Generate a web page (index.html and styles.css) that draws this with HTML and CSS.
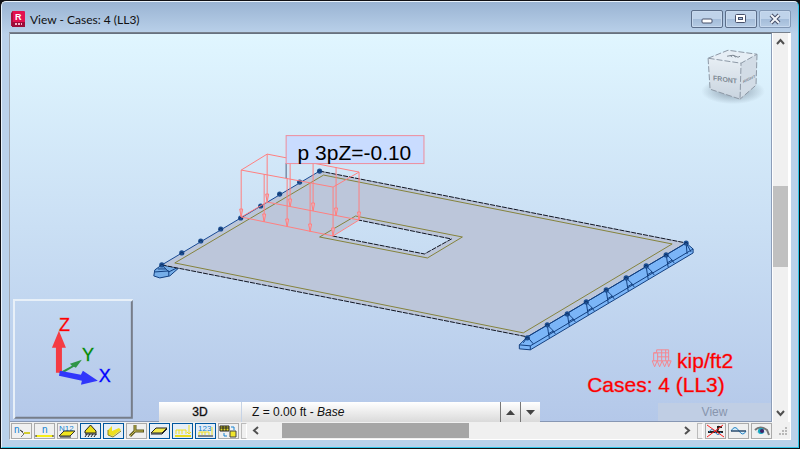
FILE: index.html
```html
<!DOCTYPE html>
<html lang="en">
<head>
<meta charset="utf-8">
<title>View - Cases: 4 (LL3)</title>
<link rel="stylesheet" href="styles.css">
</head>
<body>
<div class="window">
  <header class="titlebar">
    <svg class="app-icon" width="15" height="17" viewBox="0 0 15 17" aria-hidden="true">
      <rect x="1" y="0" width="13" height="16" rx="1" fill="#e3104f"/>
      <path d="M0 2l2-2v15H0z" fill="#a8123f"/>
      <path d="M1 11h13v5H1z" fill="#9c0b38"/>
      <text class="icon-letter" x="4" y="9">R</text>
      <path d="M4 13h7" stroke="#f3b3c6" stroke-width="2" stroke-dasharray="2 1"/>
    </svg>
    <h1 class="title">View - Cases: 4 (LL3)</h1>
    <div class="window-buttons">
      <button class="window-button" aria-label="Minimize"><svg width="14" height="12" viewBox="0 0 14 12"><rect x="2" y="6" width="10" height="4" rx="1" fill="#fff" stroke="#47506a"/></svg></button>
      <button class="window-button" aria-label="Maximize"><svg width="14" height="12" viewBox="0 0 14 12"><rect x="1.500" y="1.500" width="10" height="8" rx="1" fill="#fff" stroke="#47506a"/><rect x="4.500" y="4.500" width="4" height="2" fill="#a9c1df" stroke="#47506a"/></svg></button>
      <button class="window-button close" aria-label="Close"><svg width="14" height="12" viewBox="0 0 14 12"><path d="M3 2l8 8M11 2l-8 8" stroke="#47506a" stroke-width="4"/><path d="M3 2l8 8M11 2l-8 8" stroke="#f2f5fa" stroke-width="2"/></svg></button>
    </div>
  </header>

  <main class="client">
    <div class="view-row">
      <section class="canvas">
        <svg class="scene" viewBox="9 34 762 387" role="img" aria-label="Slab model with load case">
          <defs>
            <radialGradient id="shadow"><stop offset="0" stop-color="#667788" stop-opacity=".7"/><stop offset="1" stop-color="#667788" stop-opacity="0"/></radialGradient>
            <linearGradient id="face" x2="0" y2="1"><stop offset="0" stop-color="#e7eef4"/><stop offset="1" stop-color="#c9d4df"/></linearGradient>
            <g id="node"><circle r="2.600" fill="#1d4f91"/><path d="M-2 1l2-2 2 2" fill="none" stroke="#0b2f66"/></g>
            <path id="arrow" d="M-1.500-8h3L0 0z" fill="#e9b4bf" stroke="#ff8080"/>
            <path id="brace" d="M0 0l1 7 1 6M0 0l5 5 3 4M1 9l5-3" fill="none" stroke="#123f80"/>
          </defs>

          <path d="M154 270l7-5 17 3-9 8-10 2-6-2z" fill="#76aee8" stroke="#123f80"/>
          <path d="M154 272l14-1v5M157 269l8 0 3 3 8-4M161 265l4 4" fill="none" stroke="#123f80"/>
          <path fill-rule="evenodd" d="M161 265L319 171 686 243 527 337zM332 236L424 254 451 239 358 220z" fill="#bcc6da"/>
          <path d="M319 171L686 243M161 265L527 337M332 236L424 254 451 239 358 220" fill="none" stroke="#101420" stroke-dasharray="5 1"/>
          <path d="M174 263L323 175 672 244 523 333zM319 237L355 216 462 237 427 258z" fill="none" stroke="#85833b"/>
          <path d="M161 265L319 171" stroke="#174894"/>

          <path d="M527 337L686 243 693 249 693 253 530 350 519 349 519 345z" fill="#7bb5f7" stroke="#123f80"/>
          <path d="M519 345l11 1 163-97M530 346v4M523 343l4-6 6 7M527 337L686 243" fill="none" stroke="#123f80"/>
          <g><use href="#brace" x="547" y="325"/><use href="#brace" x="567" y="313"/><use href="#brace" x="586" y="302"/><use href="#brace" x="606" y="290"/><use href="#brace" x="626" y="278"/><use href="#brace" x="646" y="266"/><use href="#brace" x="666" y="254"/></g>
          <path d="M686 243l1 11M686 243l5 9" stroke="#123f80"/>
          <g><use href="#node" x="161" y="265"/><use href="#node" x="181" y="253"/><use href="#node" x="200" y="241"/><use href="#node" x="220" y="229"/><use href="#node" x="240" y="218"/><use href="#node" x="260" y="206"/><use href="#node" x="279" y="194"/><use href="#node" x="299" y="182"/><use href="#node" x="319" y="171"/></g>
          <g><use href="#node" x="527" y="338"/><use href="#node" x="547" y="325"/><use href="#node" x="567" y="314"/><use href="#node" x="586" y="302"/><use href="#node" x="606" y="290"/><use href="#node" x="626" y="278"/><use href="#node" x="646" y="266"/><use href="#node" x="666" y="255"/><use href="#node" x="686" y="243"/></g>

          <path d="M240.500 170L266.500 154 358.500 172 332.500 187zM240.500 217L266.500 202 358.500 220 332.500 236zM240.500 170v47M263.500 174v48M286.500 178v48M309.500 183v49M332.500 187v49M266.500 154v48M289.500 158v49M312.500 163v48M335.500 167v49M358.500 172v48" fill="none" stroke="#ff8080"/>
          <g><use href="#arrow" x="240.500" y="217"/><use href="#arrow" x="263.500" y="222"/><use href="#arrow" x="286.500" y="227"/><use href="#arrow" x="309.500" y="232"/><use href="#arrow" x="332.500" y="236"/><use href="#arrow" x="266.500" y="202"/><use href="#arrow" x="289.500" y="207"/><use href="#arrow" x="312.500" y="211"/><use href="#arrow" x="335.500" y="216"/><use href="#arrow" x="358.500" y="220"/></g>
          <path d="M285.500 163v15" stroke="#51627f"/>
          <rect x="285.500" y="135.500" width="138" height="28" fill="#c9dcff" stroke="#ee8c9b"/>
          <text class="scene-text" x="297" y="160">p 3pZ=-0.10</text>

          <g>
            <ellipse cx="733" cy="91" rx="32" ry="13" fill="url(#shadow)"/>
            <path d="M708 58L728 50 757 54 741 63z" fill="#e6eef5"/>
            <path d="M708 58L741 63 740 99 710 89z" fill="url(#face)"/>
            <path d="M741 63L757 54 756 85 740 99z" fill="#d2dce6"/>
            <path d="M708 58L728 50 757 54 741 63zM708 58L710 89 740 99 741 63M757 54L756 85 740 99" fill="none" stroke="#8d98a5" stroke-dasharray="6 2"/>
            <text class="cube-text" transform="translate(713 80) skewY(8)">FRONT</text>
            <text class="cube-text cube-side" transform="translate(743 83) skewY(-25)">RIGHT</text>
            <path d="M727 56l6-1M732 57l-2-2M736 57l-3-2 5 2 2-1" stroke="#7e8994" fill="none"/>
          </g>

          <g fill="none" stroke="#f58791"><path d="M653.500 361v-8h3v-3h12v11M653.500 353h15M657.500 353v8M661.500 350v11M665.500 350v11M657 357h12"/><path d="M652 361h5l-2.500 6zM657 361h5l-2.500 6zM662 361h5l-2.500 6zM667 361h4l-2.500 6z"/></g>
          <text class="scene-text unit" x="677" y="368">kip/ft2</text>
          <text class="scene-text unit" x="587" y="392">Cases: 4 (LL3)</text>

          <path d="M12 299h120v2H14v118h-2z" fill="#e8f0f8"/>
          <path d="M132 300v119H13l2-2h115V302z" fill="#767d89"/>
          <path d="M58 373l13-7-2-2 12-4-6 8-2-1-12 7z" fill="#309648"/>
          <path d="M55 373V348H51L58 331 65 348H61V373z" fill="#f43b43"/>
          <path d="M59 371l21 4 2-4 15 10-17 4 1-4-23-5z" fill="#3137fb"/>
          <text class="axis axis-z" x="58" y="331">Z</text>
          <text class="axis axis-y" x="81" y="361">Y</text>
          <text class="axis axis-x" x="98" y="382">X</text>
        </svg>
        <div class="level-bar">
          <button class="projection">3D</button>
          <button class="level">Z = 0.00 ft - <i>Base</i></button>
          <button class="step" aria-label="Level up"><svg width="9" height="5" viewBox="0 0 9 5"><path d="M0 5L4.500 0 9 5z" fill="#444"/></svg></button>
          <button class="step" aria-label="Level down"><svg width="9" height="5" viewBox="0 0 9 5"><path d="M0 0h9L4.500 5z" fill="#444"/></svg></button>
        </div>
        <button class="view-button">View</button>
      </section>
      <div class="vscroll">
        <button class="arrow" aria-label="Scroll up"><svg width="9" height="7" viewBox="0 0 9 7"><path d="M1 6l3.500-4L8 6" fill="none" stroke="#505050" stroke-width="2"/></svg></button>
        <div class="vtrack"><div class="vthumb"></div></div>
        <button class="arrow" aria-label="Scroll down"><svg width="9" height="7" viewBox="0 0 9 7"><path d="M1 1l3.500 4L8 1" fill="none" stroke="#505050" stroke-width="2"/></svg></button>
      </div>
    </div>

    <footer class="status-row">
      <div class="tools">
        <button class="tool" aria-label="Node numbers"><svg viewBox="0 0 19 14"><text class="tool-text" x="2" y="9">n</text><path d="M9 7l3 3-3 3" stroke="#777" fill="none"/><path d="M12 9h6" stroke="#d3cc30" stroke-width="2"/><path d="M8 6l3 2" stroke="#333"/></svg></button>
        <button class="tool" aria-label="Bar numbers"><svg viewBox="0 0 19 14"><text class="tool-text" x="7" y="9">n</text><path d="M1 12h17" stroke="#f6ee19" stroke-width="2"/><path d="M1 11v2M18 11v2" stroke="#333"/></svg></button>
        <button class="tool" aria-label="Panel numbers"><svg viewBox="0 0 19 14"><text class="tool-text small" x="1" y="7">N12</text><path d="M6 7h11l-5 5H1z" fill="#f1e51e" stroke="#333"/><path d="M2 13h11" stroke="#222"/></svg></button>
        <button class="tool active" aria-label="Supports"><svg viewBox="0 0 19 14"><path d="M9.500 1L4 7v2h11V7z" fill="#eadd18" stroke="#222"/><path d="M4 10h12M6 10l-2 3M9 10l-2 3M12 10l-2 3M15 10l-2 3" stroke="#222"/></svg></button>
        <button class="tool active" aria-label="Profiles"><svg viewBox="0 0 19 14"><path d="M4 6l4-4v5l7-3 2 2-8 6-5-1z" fill="#eedf20"/><path d="M4 6v5l5 2 8-6" fill="none" stroke="#8d841c"/></svg></button>
        <button class="tool" aria-label="Local axes"><svg viewBox="0 0 19 14"><path d="M8 1v6L3 12M8 7h9" fill="none" stroke="#5d5820" stroke-width="3"/><path d="M8 1v6L3 12M8 7h8" fill="none" stroke="#c6bc4e"/></svg></button>
        <button class="tool active" aria-label="Panels"><svg viewBox="0 0 19 14"><path d="M6 4h11l-5 5H1z" fill="#f5eb4a" stroke="#222"/><path d="M1 10h11l5-5" fill="none" stroke="#222"/></svg></button>
        <button class="tool active" aria-label="Load symbols"><svg viewBox="0 0 19 14"><path d="M3 10V6h10v4M6 6v4M9 6v4M16 1v9M14 8l2 2 2-2" fill="none" stroke="#f0df20"/><path d="M2 12h16" stroke="#e7db20" stroke-width="2"/></svg></button>
        <button class="tool active" aria-label="Load values"><svg viewBox="0 0 19 14"><text class="tool-text small" x="2" y="7">123</text><path d="M3 11V8h10v3M6 8v3M9 8v3M16 3v8" fill="none" stroke="#f0df20"/><path d="M2 12h15" stroke="#222"/></svg></button>
        <button class="tool" aria-label="Display settings"><svg viewBox="0 0 19 14"><path d="M1 2h9v5H1z" fill="#e4dc28" stroke="#222"/><path d="M1 4h9M4 2v5M7 2v5" stroke="#222"/><path d="M12 3h3v3M8 12H5V9" fill="none" stroke="#1583d2"/><path d="M11 7h6v6h-6z" fill="#f1e62c" stroke="#444"/></svg></button>
        <span class="splitter"></span>
      </div>
      <div class="hscroll">
        <button class="arrow" aria-label="Scroll left"><svg width="7" height="9" viewBox="0 0 7 9"><path d="M6 1L2 4.500 6 8" fill="none" stroke="#505050" stroke-width="2"/></svg></button>
        <div class="htrack"><div class="hthumb"></div></div>
        <button class="arrow" aria-label="Scroll right"><svg width="7" height="9" viewBox="0 0 7 9"><path d="M1 1l4 3.500L1 8" fill="none" stroke="#505050" stroke-width="2"/></svg></button>
      </div>
      <div class="tools right">
        <span class="splitter"></span>
        <button class="tool" aria-label="Hide diagrams"><svg viewBox="0 0 19 14"><path d="M2 8h15M13 2l-2 6M11 3h5" stroke="#222" stroke-width="2"/><path d="M3 8q3-5 6 0t6 0" fill="none" stroke="#237fc0"/><path d="M1 1l17 12M17 1L1 13" stroke="#f22"/></svg></button>
        <button class="tool" aria-label="Diagrams"><svg viewBox="0 0 19 14"><path d="M2 7q4-7 8 0 4 6 7 0z" fill="#d9edfa" stroke="#2585c6"/><path d="M2 7h15" stroke="#334"/></svg></button>
        <button class="tool" aria-label="View options"><svg viewBox="0 0 19 14"><path d="M3 6q5-5 12 0l2 5" fill="none" stroke="#777" stroke-width="2"/><path d="M4 8q5-5 10 0-5 4-10 0z" fill="#c5dfed"/><circle cx="9" cy="7" r="3" fill="#14a6be"/><circle cx="10" cy="7" r="2" fill="#432266"/></svg></button>
      </div>
      <svg class="grip" width="17" height="17" viewBox="0 0 17 17" aria-hidden="true"><path d="M12 6h2M9 9h2M12 9h2M6 12h2M9 12h2M12 12h2" stroke="#b8b8b8" stroke-width="2"/></svg>
    </footer>
  </main>
</div>
</body>
</html>
```

FILE: styles.css
```css
* { box-sizing: border-box; }
html, body { height: 100%; margin: 0; }
body {
  background: #101014;
  font-family: "Liberation Sans", Arial, sans-serif;
  font-size: 12px;
  overflow: hidden;
}
button {
  margin: 0;
  padding: 0;
  border: 0;
  background: none;
  font: inherit;
  color: inherit;
  display: flex;
  align-items: center;
  justify-content: center;
}
.window {
  height: calc(100vh - 2px);
  margin: 1px 1px 1px;
  display: flex;
  flex-direction: column;
  padding: 0 7px 7px;
  border: 1px solid #e9f2fb;
  border-right-color: #2fc4e6;
  border-bottom-color: #2fc4e6;
  border-radius: 5px 5px 0 0;
  background: linear-gradient(#9ab4d3, #bad1ea 32px, #b9d1ea);
}
.titlebar {
  display: flex;
  align-items: center;
  height: 30px;
  flex: none;
  padding: 4px 0 0 2px;
}
.app-icon { flex: none; }
.icon-letter { font: bold 9px "Liberation Sans", sans-serif; fill: #fff; }
.title {
  flex: 1;
  margin: 0 0 0 4px;
  font: 12px Lato, "Open Sans", sans-serif;
  color: #101010;
}
.window-buttons { display: flex; gap: 2px; }
.window-button {
  width: 32px;
  height: 18px;
  border: 1px solid #5b6e8a;
  border-radius: 2px;
  box-shadow: inset 0 0 0 1px #c7d9ee;
  background: linear-gradient(#bfd3ea 50%, #a3bcd9 50%, #b5cbe4);
}
.window-button.close { border-color: #8197b4; }
.client {
  flex: 1;
  min-height: 0;
  display: flex;
  flex-direction: column;
  border: 1px solid #a0a6ae;
  border-top-color: #77808c;
  border-right-color: #fff;
  border-bottom-color: #fff;
  background: #f0f0f0;
}
.view-row { flex: 1; min-height: 0; display: flex; }
.canvas {
  position: relative;
  flex: 1;
  min-width: 0;
  border: 1px solid #667180;
  border-width: 1px 1px 1px 0;
  border-right-color: #8c9db8;
  border-bottom-color: #8797b3;
  background: linear-gradient(#e0f6ff, #b4c8e9);
}
.scene { display: block; width: 100%; height: 100%; }
.scene-text { font: 21px "Liberation Sans", Arial, sans-serif; fill: #000; }
.unit { fill: #f00; stroke: #f00; stroke-opacity: .3; }
.axis { font: 18px "Liberation Sans", Arial, sans-serif; stroke-opacity: .3; }
.axis-z { fill: #f00; stroke: #f00; }
.axis-y { fill: #008a00; stroke: #008a00; }
.axis-x { fill: #00f; stroke: #00f; }
.cube-text { font: bold 7px "Liberation Sans", Arial, sans-serif; fill: #7f8a95; }
.cube-side { font-size: 4px; }
.level-bar {
  position: absolute;
  left: 149px;
  bottom: -1px;
  width: 50%;
  height: 20px;
  display: flex;
  background: linear-gradient(#fff, #dadada);
  color: #111;
}
.projection { width: 82px; -webkit-text-stroke: 1px rgba(0, 0, 0, .3); }
.level {
  flex: 1;
  justify-content: flex-start;
  padding-left: 10px;
  border-left: 1px solid #c6d3e6;
  white-space: pre;
}
.step { width: 20px; border-left: 1px solid #777; }
.view-button {
  position: absolute;
  right: 0;
  bottom: 0;
  width: 113px;
  height: 18px;
  background: #c0cee4;
  color: #8795ad;
}
.vscroll {
  width: 18px;
  display: flex;
  flex-direction: column;
  border: solid #fff;
  border-width: 0 2px 0 1px;
}
.vscroll .arrow { height: 17px; flex: none; }
.vtrack { flex: 1; padding-top: 136px; }
.vthumb { height: 81px; background: #c0c0c0; }
.status-row { display: flex; height: 17px; flex: none; background: #f0f0f0; }
.tools { display: flex; align-items: center; gap: 2px; padding-left: 1px; }
.tool {
  width: 21px;
  height: 16px;
  border: 1px solid #aaa;
  background: #f0f0f0;
}
.tool.active { border-color: #00569e; background: #e5eef7; }
.tool svg { width: 19px; height: 14px; overflow: visible; }
.tool-text { font: 10px "Liberation Sans", sans-serif; fill: #1583d2; }
.tool-text.small { font-size: 8px; }
.splitter { width: 6px; height: 16px; border: 1px solid #bbb; border-right-color: #fff; }
.hscroll { flex: 1; display: flex; min-width: 0; }
.hscroll .arrow { width: 17px; }
.htrack { flex: 1; padding: 1px 0 1px 18px; }
.hthumb { width: 47%; height: 15px; background: #a6a6a6; }
.grip { flex: none; margin-left: 1px; }
```
